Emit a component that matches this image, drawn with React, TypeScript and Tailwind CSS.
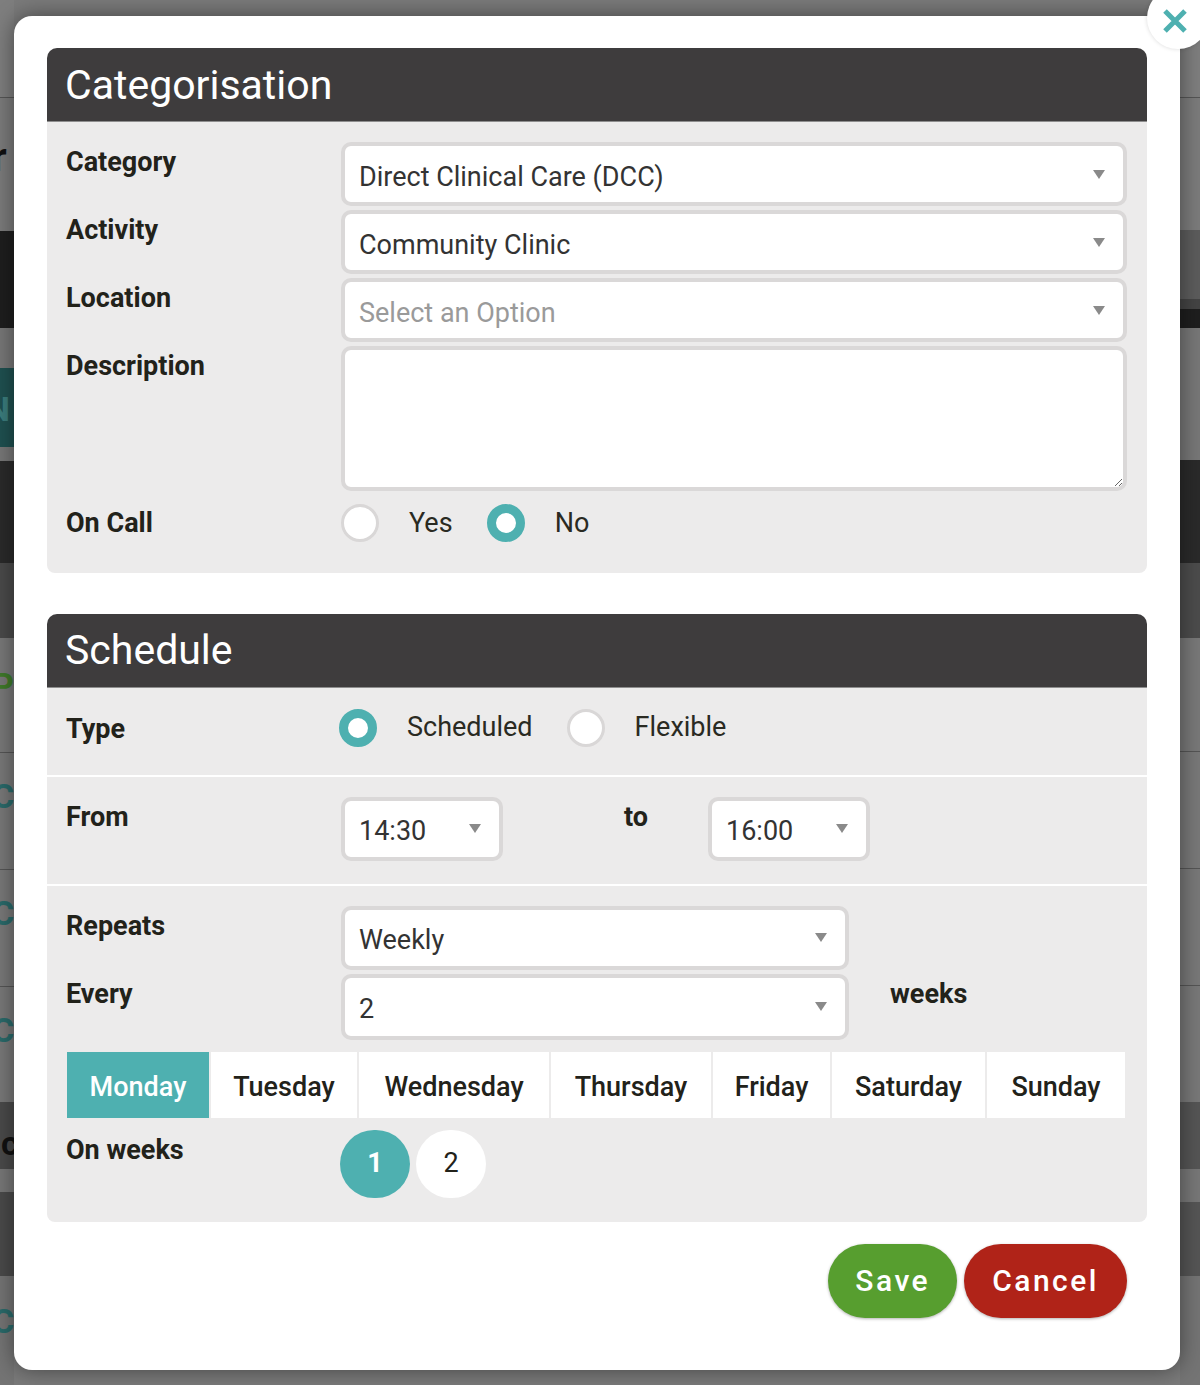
import React from 'react';

const labelCls = "w-[275px] shrink-0 pt-[4px] text-[27px] font-bold leading-8 text-[#22221a]";

function Caret() {
  return (
    <svg width="12" height="9" viewBox="0 0 12 9" className="shrink-0">
      <path d="M0 0h12L6 9z" fill="#8a8a8a" />
    </svg>
  );
}

function SelectBox({ value, placeholder, className = "" }: { value?: string; placeholder?: string; className?: string }) {
  return (
    <div className={`flex h-[64px] items-center justify-between rounded-[10px] border-4 border-[#dad8d8] bg-white pl-[14px] pr-[18px] text-[27px] ${className}`}>
      {value ? <span className="pt-[6px] text-[#333333]">{value}</span> : <span className="pt-[6px] text-[#9a9a9a]">{placeholder}</span>}
      <Caret />
    </div>
  );
}

function Radio({ checked }: { checked?: boolean }) {
  return checked ? (
    <div className="h-[38px] w-[38px] shrink-0 rounded-full border-[9px] border-[#4eb0b0] bg-white" />
  ) : (
    <div className="h-[38px] w-[38px] shrink-0 rounded-full border-[3px] border-[#d9d7d7] bg-white" />
  );
}

function RadioOption({ label, checked }: { label: string; checked?: boolean }) {
  return (
    <div className="mr-[34px] flex items-center">
      <Radio checked={checked} />
      <span className="ml-[30px] text-[27px] text-[#2a2a22]">{label}</span>
    </div>
  );
}

function SectionHeader({ title }: { title: string }) {
  return (
    <div className="flex h-[74px] items-center rounded-t-[10px] border-b border-[#8e8e8e] bg-[#3e3c3d] px-[18px] pt-[2px] text-[41px] text-white">
      {title}
    </div>
  );
}

const days = [
  { name: 'Monday', w: 'w-[142px]', active: true },
  { name: 'Tuesday', w: 'w-[146px]' },
  { name: 'Wednesday', w: 'w-[190px]' },
  { name: 'Thursday', w: 'w-[160px]' },
  { name: 'Friday', w: 'w-[117px]' },
  { name: 'Saturday', w: 'w-[153px]' },
  { name: 'Sunday', w: 'w-[138px]' },
];

function Strip({ rows }: { rows: { h: string; bg: string; line?: boolean; text?: string; tc?: string; ml?: string }[] }) {
  return (
    <div className="flex flex-col">
      {rows.map((r, i) => (
        <div key={i} className={`${r.h} ${r.bg} ${r.line ? 'border-b border-[#555555]' : ''} overflow-hidden`}>
          {r.text && (
            <div className={`${r.ml} mt-[16px] whitespace-nowrap text-[34px] font-bold ${r.tc}`}>{r.text}</div>
          )}
        </div>
      ))}
    </div>
  );
}

export default function App() {
  const left = [
    { h: 'h-[98px]', bg: 'bg-[#7e7e7e]', line: true },
    { h: 'h-[133px]', bg: 'bg-[#7b7b7b]', text: 'r', tc: 'text-[#111111] text-[40px]', ml: '-ml-[8px] !mt-[30px]' },
    { h: 'h-[97px]', bg: 'bg-[#1e1e1e]' },
    { h: 'h-[40px]', bg: 'bg-[#777777]' },
    { h: 'h-[79px]', bg: 'bg-[#1f5050]', text: 'N', tc: 'text-[#3b7d7d]', ml: '-ml-[14px]' },
    { h: 'h-[14px]', bg: 'bg-[#777777]' },
    { h: 'h-[102px]', bg: 'bg-[#2a2a2a]' },
    { h: 'h-[75px]', bg: 'bg-[#4a4a4a]' },
    { h: 'h-[115px]', bg: 'bg-[#787878]', line: true, text: 'P', tc: 'text-[#3f7a2a] text-[28px]', ml: '-ml-[8px] !mt-[22px]' },
    { h: 'h-[117px]', bg: 'bg-[#787878]', line: true, text: 'C', tc: 'text-[#2a6a6a] text-[28px]', ml: '-ml-[8px] !mt-[18px]' },
    { h: 'h-[117px]', bg: 'bg-[#787878]', line: true, text: 'C', tc: 'text-[#2a6a6a] text-[28px]', ml: '-ml-[8px] !mt-[18px]' },
    { h: 'h-[115px]', bg: 'bg-[#787878]', text: 'C', tc: 'text-[#2a6a6a] text-[28px]', ml: '-ml-[8px] !mt-[18px]' },
    { h: 'h-[67px]', bg: 'bg-[#4a4a4a]', text: 'lc', tc: 'text-[#111111] text-[28px]', ml: '-ml-[8px] !mt-[16px]' },
    { h: 'h-[23px]', bg: 'bg-[#777777]' },
    { h: 'h-[84px]', bg: 'bg-[#4a4a4a]' },
    { h: 'h-[109px]', bg: 'bg-[#747474]', text: 'C', tc: 'text-[#2a6a6a] text-[28px]', ml: '-ml-[8px] !mt-[20px]' },
  ];
  const right = [
    { h: 'h-[98px]', bg: 'bg-[#7e7e7e]', line: true },
    { h: 'h-[132px]', bg: 'bg-[#7b7b7b]' },
    { h: 'h-[69px]', bg: 'bg-[#5c5c5c]' },
    { h: 'h-[10px]', bg: 'bg-[#444444]' },
    { h: 'h-[19px]', bg: 'bg-[#1e1e1e]' },
    { h: 'h-[132px]', bg: 'bg-[#777777]' },
    { h: 'h-[103px]', bg: 'bg-[#2a2a2a]' },
    { h: 'h-[75px]', bg: 'bg-[#4c4c4c]' },
    { h: 'h-[114px]', bg: 'bg-[#787878]', line: true },
    { h: 'h-[117px]', bg: 'bg-[#787878]', line: true },
    { h: 'h-[117px]', bg: 'bg-[#787878]', line: true },
    { h: 'h-[116px]', bg: 'bg-[#787878]' },
    { h: 'h-[67px]', bg: 'bg-[#555555]' },
    { h: 'h-[33px]', bg: 'bg-[#777777]' },
    { h: 'h-[74px]', bg: 'bg-[#555555]' },
    { h: 'h-[109px]', bg: 'bg-[#747474]' },
  ];

  return (
    <div className="relative h-[1385px] w-[1200px] overflow-hidden bg-[#7a7a7a] font-['Roboto',sans-serif]">
      {/* page behind the overlay */}
      <div className="flex h-full">
        <div className="w-[14px]"><Strip rows={left} /></div>
        <div className="flex-1" />
        <div className="w-[20px]"><Strip rows={right} /></div>
      </div>

      {/* modal */}
      <div className="absolute left-[14px] top-[16px] h-[1354px] w-[1166px] rounded-[18px] bg-white px-[33px] pt-[32px] shadow-[0_0_22px_rgba(0,0,0,0.45)]">
        {/* Categorisation */}
        <section>
          <SectionHeader title="Categorisation" />
          <div className="flex flex-col gap-[4px] rounded-b-[8px] bg-[#ecebeb] pb-[29px] pl-[19px] pr-[20px] pt-[20px]">
            <div className="flex">
              <div className={labelCls}>Category</div>
              <SelectBox className="flex-1" value="Direct Clinical Care (DCC)" />
            </div>
            <div className="flex">
              <div className={labelCls}>Activity</div>
              <SelectBox className="flex-1" value="Community Clinic" />
            </div>
            <div className="flex">
              <div className={labelCls}>Location</div>
              <SelectBox className="flex-1" placeholder="Select an Option" />
            </div>
            <div className="flex">
              <div className={labelCls}>Description</div>
              <textarea className="h-[145px] flex-1 resize-y rounded-[10px] border-4 border-[#dad8d8] bg-white outline-none" />
            </div>
            <div className="mt-[8px] flex">
              <div className={labelCls}>On Call</div>
              <div className="flex items-center">
                <RadioOption label="Yes" />
                <RadioOption label="No" checked />
              </div>
            </div>
          </div>
        </section>

        {/* Schedule */}
        <section className="mt-[41px]">
          <SectionHeader title="Schedule" />
          <div className="rounded-b-[8px] bg-[#ecebeb]">
            <div className="flex h-[89px] border-b-2 border-white pl-[19px] pr-[20px] pt-[21px]">
              <div className={labelCls}>Type</div>
              <div className="-ml-[2px] flex h-[38px] items-center">
                <RadioOption label="Scheduled" checked />
                <RadioOption label="Flexible" />
              </div>
            </div>

            <div className="flex border-b-2 border-white pb-[23px] pl-[19px] pr-[20px] pt-[20px]">
              <div className={labelCls}>From</div>
              <SelectBox className="w-[162px]" value="14:30" />
              <div className="ml-[121px] w-[84px] pt-[4px] text-[27px] font-bold leading-8 text-[#22221a]">to</div>
              <SelectBox className="w-[162px]" value="16:00" />
            </div>

            <div className="flex flex-col pb-[24px] pl-[19px] pr-[20px] pt-[20px]">
              <div className="flex">
                <div className={labelCls}>Repeats</div>
                <SelectBox className="w-[508px]" value="Weekly" />
              </div>
              <div className="mt-[4px] flex">
                <div className={labelCls}>Every</div>
                <SelectBox className="h-[66px] w-[508px]" value="2" />
                <div className="ml-[41px] pt-[4px] text-[27px] font-bold leading-8 text-[#22221a]">weeks</div>
              </div>

              <div className="ml-[1px] mt-[12px] flex h-[66px] gap-[2px]">
                {days.map((d) => (
                  <div
                    key={d.name}
                    className={`${d.w} flex items-center justify-center pt-[5px] text-[27px] font-medium ${d.active ? 'bg-[#4eb0b0] text-white' : 'bg-white text-[#22221a]'}`}
                  >
                    {d.name}
                  </div>
                ))}
              </div>

              <div className="mt-[12px] flex">
                <div className={labelCls}>On weeks</div>
                <div className="-ml-[1px] flex gap-[6px]">
                  <div className="flex h-[68px] w-[70px] items-center justify-center rounded-full bg-[#4eb0b0] text-[27px] font-bold text-white">1</div>
                  <div className="flex h-[68px] w-[70px] items-center justify-center rounded-full bg-white text-[27px] text-[#22221a]">2</div>
                </div>
              </div>
            </div>
          </div>
        </section>

        <div className="mt-[22px] flex justify-end gap-[7px] pr-[20px]">
          <button className="h-[74px] rounded-full bg-[#579e2f] px-[27px] text-[30px] font-medium tracking-[2.5px] text-white shadow-[0_1px_3px_rgba(0,0,0,0.3)]">
            Save
          </button>
          <button className="h-[74px] rounded-full bg-[#b02318] px-[28px] text-[30px] font-medium tracking-[2.5px] text-white shadow-[0_1px_3px_rgba(0,0,0,0.3)]">
            Cancel
          </button>
        </div>
      </div>

      {/* close button */}
      <div className="absolute left-[1147px] top-[-13px] flex h-[62px] w-[62px] items-center justify-center rounded-full bg-white pr-[6px] pt-[6px] shadow-[0_0_4px_rgba(0,0,0,0.15)]">
        <svg width="26" height="26" viewBox="0 0 26 26">
          <path d="M3 3L23 23M23 3L3 23" stroke="#4eb0b0" strokeWidth="5" />
        </svg>
      </div>
    </div>
  );
}
